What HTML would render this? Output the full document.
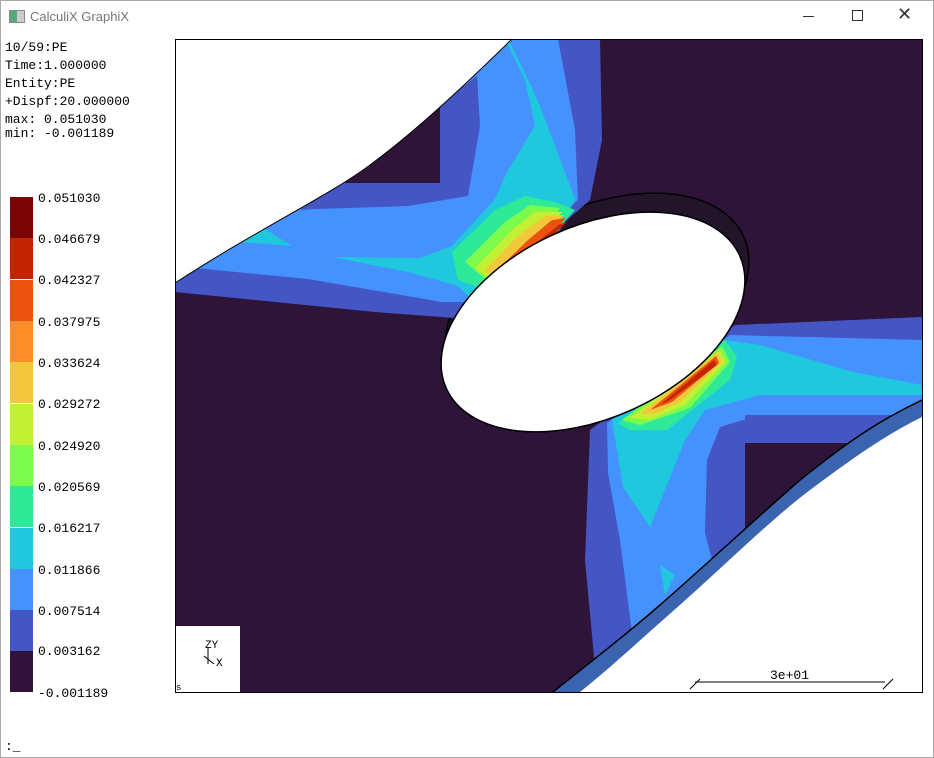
<!DOCTYPE html>
<html><head><style>
body{margin:0;width:934px;height:758px;background:#fff;position:relative;overflow:hidden;font-family:"Liberation Mono",monospace}
.win{position:absolute;left:0;top:0;width:932px;height:756px;border:1px solid #aaa}
.t{position:absolute;font-size:13px;color:#000;white-space:pre;line-height:13px}
.title{position:absolute;left:30px;top:9px;font:13px "Liberation Sans",sans-serif;color:#777}
.leg{position:absolute;left:10px;width:23px;height:41.3px}
</style></head><body>
<div class="win"></div>
<div style="position:absolute;left:9px;top:10px;width:14px;height:11px;border:1px solid #888;background:linear-gradient(90deg,#5a7 50%,#ccc 50%)"></div>
<div class="title">CalculiX GraphiX</div>
<div style="position:absolute;left:803px;top:16px;width:11px;height:1px;background:#333"></div>
<div style="position:absolute;left:852px;top:10px;width:9px;height:9px;border:1px solid #333"></div>
<div style="position:absolute;left:897px;top:4px;font:18px 'Liberation Sans',sans-serif;color:#333">✕</div>
<div class="t" style="left:5px;top:41px">10/59:PE</div>
<div class="t" style="left:5px;top:59px">Time:1.000000</div>
<div class="t" style="left:5px;top:77px">Entity:PE</div>
<div class="t" style="left:5px;top:95px">+Dispf:20.000000</div>
<div class="t" style="left:5px;top:113px">max: 0.051030</div>
<div class="t" style="left:5px;top:127px">min: -0.001189</div>
<div class="leg" style="top:197px;background:#7a0403"></div>
<div class="leg" style="top:238px;background:#c32503"></div>
<div class="leg" style="top:280px;background:#ec5311"></div>
<div class="leg" style="top:321px;background:#fd8e2a"></div>
<div class="leg" style="top:362px;background:#f2c83a"></div>
<div class="leg" style="top:404px;background:#c3f033"></div>
<div class="leg" style="top:445px;background:#7dfb4c"></div>
<div class="leg" style="top:486px;background:#2eea98"></div>
<div class="leg" style="top:528px;background:#1fc8dd"></div>
<div class="leg" style="top:569px;background:#4592fe"></div>
<div class="leg" style="top:610px;background:#4455c4"></div>
<div class="leg" style="top:651px;height:41px;background:#30123b"></div>
<div class="t" style="left:38px;top:192px">0.051030</div>
<div class="t" style="left:38px;top:233px">0.046679</div>
<div class="t" style="left:38px;top:274px">0.042327</div>
<div class="t" style="left:38px;top:316px">0.037975</div>
<div class="t" style="left:38px;top:357px">0.033624</div>
<div class="t" style="left:38px;top:398px">0.029272</div>
<div class="t" style="left:38px;top:440px">0.024920</div>
<div class="t" style="left:38px;top:481px">0.020569</div>
<div class="t" style="left:38px;top:522px">0.016217</div>
<div class="t" style="left:38px;top:564px">0.011866</div>
<div class="t" style="left:38px;top:605px">0.007514</div>
<div class="t" style="left:38px;top:645px">0.003162</div>
<div class="t" style="left:38px;top:687px">-0.001189</div>
<div class="t" style="left:5px;top:740px">:_</div>
<svg style="position:absolute;left:0;top:0" width="934" height="758">
<defs><clipPath id="c"><rect x="175" y="39" width="747" height="653"/></clipPath></defs>
<g clip-path="url(#c)">
<rect x="175" y="39" width="747" height="653" fill="#2e1439"/>
<ellipse cx="597" cy="303" rx="161" ry="96" transform="rotate(-24.4 597 303)" fill="#22152a" stroke="#000" stroke-width="1.5"/>
<polygon fill="#4455c4" points="175,270 512,39 600,39 602,140 590,200 470,305 455,318 375,312 175,292"/>
<polygon fill="#4592fe" points="175,283 512,39 558,39 575,130 578,200 470,302 442,302 308,279 175,266"/>
<polygon fill="#4455c4" points="300,210 477,76 480,126 468,196 408,206 315,209"/>
<polygon fill="#2e1439" points="343,183 440,183 440,103 410,133"/>
<polygon fill="#1fc8dd" points="508,39 523,69 538,101 575,199 560,230 470,298 458,286 408,272 332,257 420,258 452,246 495,199 507,172 535,126 525,80 505,39"/>
<polygon fill="#1fc8dd" points="240,242 265,229 292,246"/>
<polygon fill="#2eea98" points="452,252 495,210 525,196 555,202 575,210 500,295 458,280"/>
<polygon fill="#7dfb4c" points="465,262 505,222 530,205 560,208 498,290"/>
<polygon fill="#c3f033" points="475,268 512,230 535,212 562,212 500,288"/>
<polygon fill="#f2c83a" points="485,270 518,236 545,216 564,215 502,285"/>
<polygon fill="#ec5311" points="495,272 528,240 552,220 566,218 505,282"/>
<polygon fill="#c32503" points="505,272 540,240 560,224 567,222 510,278"/>
<polygon fill="#7a0403" points="512,270 548,240 565,228 515,275"/>
<polygon fill="#4455c4" points="590,430 735,325 922,317 922,700 598,700 585,560"/>
<polygon fill="#4592fe" points="607,423 730,335 922,340 922,415 760,415 720,427 707,460 705,533 712,560 660,610 633,640 620,540 608,473"/>
<polygon fill="#2e1439" points="745,443 922,443 922,700 745,700"/>
<polygon fill="#4455c4" points="745,415 922,415 922,443 745,443"/>
<polygon fill="#1fc8dd" points="612,420 725,340 760,345 853,372 922,385 922,395 760,395 705,410 685,440 650,527 623,487"/>
<polygon fill="#1fc8dd" points="660,565 675,575 665,595"/>
<polygon fill="#2eea98" points="618,423 725,340 737,357 730,380 667,430 630,430"/>
<polygon fill="#7dfb4c" points="622,420 722,346 730,362 690,408 640,425"/>
<polygon fill="#c3f033" points="630,418 720,350 726,362 685,405 650,420"/>
<polygon fill="#f2c83a" points="640,414 718,352 722,362 680,402 655,414"/>
<polygon fill="#ec5311" points="650,410 716,356 719,363 672,402"/>
<polygon fill="#c32503" points="660,405 714,360 717,365 670,400"/>
<ellipse cx="593" cy="322" rx="161" ry="96" transform="rotate(-24.4 593 322)" fill="#fff" stroke="#000" stroke-width="1.5"/>
<path d="M922,400 C880,420 850,440 800,480 C760,515 700,570 660,605 C620,640 580,670 553,692 L580,692 C610,668 640,640 672,612 C720,570 770,520 810,490 C850,460 885,435 922,417 Z" fill="#3a63b0"/>
<path d="M922,417 C885,435 850,460 810,490 C770,520 720,570 672,612 C640,640 610,668 580,692 L922,692 Z" fill="#fff"/>
<path d="M922,400 C880,420 850,440 800,480 C760,515 700,570 660,605 C620,640 580,670 553,692" fill="none" stroke="#000" stroke-width="1.5"/>
<rect x="175" y="626" width="65" height="66" fill="#fff"/>
</g>
<path d="M175,39 L512,39 C470,80 420,128 370,165 C330,195 260,228 175,283 Z" fill="#fff"/>
<path d="M512,39 C470,80 420,128 370,165 C330,195 260,228 175,283" fill="none" stroke="#000"/>
<rect x="175.5" y="39.5" width="747" height="653" fill="none" stroke="#000"/>
<text x="205" y="648" font-family="Liberation Mono" font-size="11">ZY</text>
<text x="216" y="666" font-family="Liberation Mono" font-size="11">X</text>
<path d="M208,648 L208,664 M204,656 L214,664" stroke="#000" fill="none"/>
<text x="176" y="690" font-family="Liberation Mono" font-size="9">s</text>
<path d="M695,682 L885,682 M690,689 L700,679 M883,689 L893,679" stroke="#000" fill="none"/>
<text x="770" y="679" font-family="Liberation Mono" font-size="13">3e+01</text>
</svg>
</body></html>
